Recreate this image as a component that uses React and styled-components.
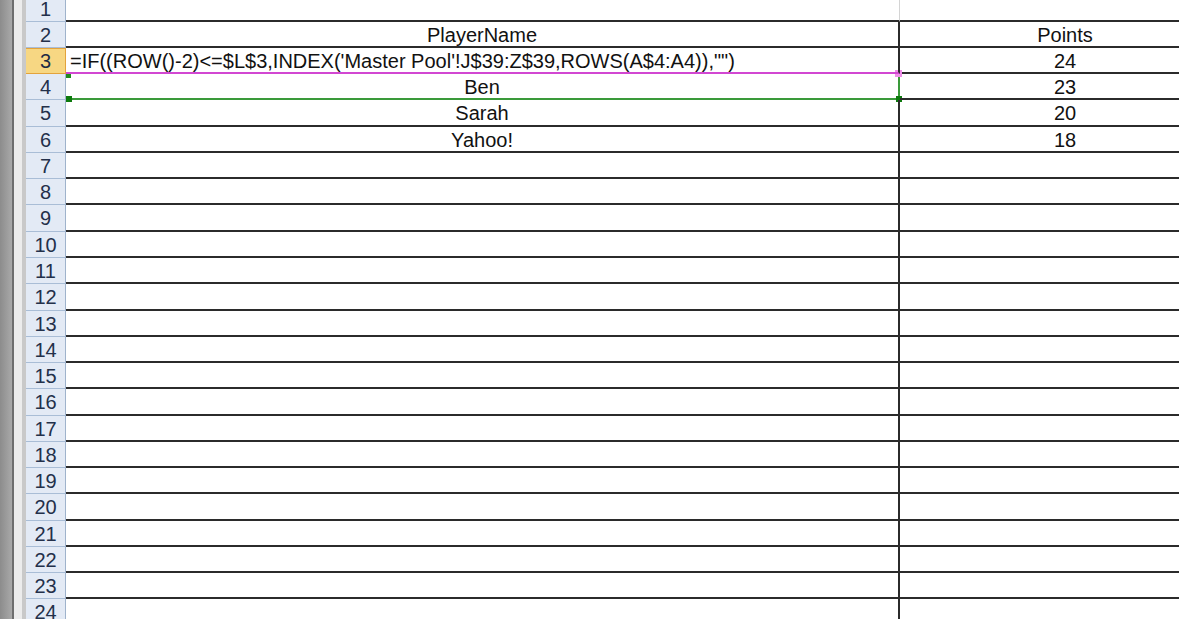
import styled, { createGlobalStyle } from "styled-components";

const GlobalStyle = createGlobalStyle`
  html, body {
    margin: 0;
    padding: 0;
    background: #ffffff;
    overflow: hidden;
  }
  body {
    font-family: "Liberation Sans", Arial, sans-serif;
  }
`;

const Window = styled.div`
  display: flex;
  width: 1179px;
  height: 619px;
  overflow: hidden;
  background: #ffffff;
`;

const Frame = styled.div`
  display: flex;
  flex: 0 0 26px;
  height: 100%;
`;

const FrameOuter = styled.div`
  width: 12px;
  background: linear-gradient(to right, #8c8c8c, #a9a9a9);
  border-right: 2px solid #6e6e6e;
`;

const FrameInner = styled.div`
  width: 8px;
  background: #ececec;
  border-right: 4px solid #c9c9c9;
`;

const Sheet = styled.div`
  flex: 1;
  display: flex;
  flex-direction: column;
  margin-top: -4px;
`;

const Row = styled.div`
  display: flex;
  height: ${(p) => p.h}px;
  flex: 0 0 auto;
`;

const RowHead = styled.div`
  flex: 0 0 40px;
  box-sizing: border-box;
  display: flex;
  align-items: center;
  justify-content: center;
  font-size: 20px;
  color: ${(p) => (p.active ? "#1d2a44" : "#23304a")};
  background: ${(p) => (p.active ? "#f7d783" : "#e3eaf5")};
  border-bottom: 1px solid ${(p) => (p.active ? "#e3a33c" : "#a9bdd6")};
  border-right: 1px solid ${(p) => (p.active ? "#e3a33c" : "#9fb3cc")};
  border-top: ${(p) => (p.active ? "1px solid #e3a33c" : "none")};
  padding-top: 1px;
`;

const Cell = styled.div`
  box-sizing: border-box;
  flex: 0 0 ${(p) => p.w}px;
  display: flex;
  align-items: center;
  justify-content: center;
  font-size: 20px;
  color: #111111;
  padding-top: 2px;
  white-space: nowrap;
  overflow: visible;
  border-bottom: ${(p) => p.bottom || "2px solid #2b2b2b"};
  border-right: ${(p) => p.right || "2px solid #2b2b2b"};
  position: relative;
`;

const FormulaCell = styled(Cell)`
  justify-content: flex-start;
  padding-left: 4px;
  z-index: 2;
`;

const Handle = styled.span`
  position: absolute;
  width: ${(p) => p.s}px;
  height: ${(p) => p.s}px;
  background: ${(p) => p.c};
  ${(p) => p.pos};
`;

const rowHeights = [26, 26, 26, 26, 27, 26, 26, 26, 27, 26, 26, 27, 26, 26, 26, 27, 26, 26, 26, 27, 26, 26, 26, 26];

const data = {
  2: ["PlayerName", "Points"],
  4: ["Ben", "23"],
  5: ["Sarah", "20"],
  6: ["Yahoo!", "18"],
};

const formula = "=IF((ROW()-2)<=$L$3,INDEX('Master Pool'!J$39:Z$39,ROWS(A$4:A4)),\"\")";

export default function App() {
  return (
    <>
      <GlobalStyle />
      <Window>
        <Frame>
          <FrameOuter />
          <FrameInner />
        </Frame>
        <Sheet>
          {rowHeights.map((h, i) => {
            const n = i + 1;
            if (n === 1) {
              return (
                <Row key={n} h={h}>
                  <RowHead>{n}</RowHead>
                  <Cell w={834} right="1px solid #d4d4d4" />
                  <Cell w={330} right="none" />
                </Row>
              );
            }
            if (n === 3) {
              return (
                <Row key={n} h={h}>
                  <RowHead active>{n}</RowHead>
                  <FormulaCell w={834} bottom="2px solid #d247d2" right="2px solid #2b2b2b">
                    {formula}
                  </FormulaCell>
                  <Cell w={330} right="none">24</Cell>
                </Row>
              );
            }
            if (n === 4) {
              return (
                <Row key={n} h={h}>
                  <RowHead>{n}</RowHead>
                  <Cell w={834} bottom="2px solid #3a9a3a" right="2px solid #3a9a3a">
                    {data[4][0]}
                    <Handle s={5} c="#1f8a1f" pos="left: 0; top: -1px;" />
                    <Handle s={6} c="#0d7a0d" pos="left: 0; bottom: -4px;" />
                    <Handle s={7} c="#ee8ee8" pos="right: -4px; top: -4px;" />
                    <Handle s={6} c="#0d7a0d" pos="right: -4px; bottom: -4px;" />
                  </Cell>
                  <Cell w={330} right="none">{data[4][1]}</Cell>
                </Row>
              );
            }
            const d = data[n] || ["", ""];
            return (
              <Row key={n} h={h}>
                <RowHead>{n}</RowHead>
                <Cell w={834}>{d[0]}</Cell>
                <Cell w={330} right="none">{d[1]}</Cell>
              </Row>
            );
          })}
        </Sheet>
      </Window>
    </>
  );
}
